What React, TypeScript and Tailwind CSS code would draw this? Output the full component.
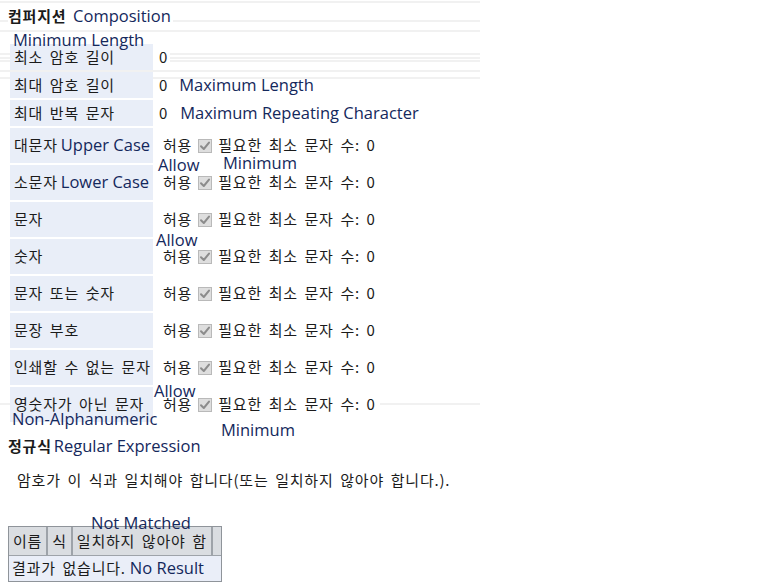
const KR = "font-['Noto_Sans_CJK_KR','Noto_Sans',sans-serif] tracking-[0.8px] [word-spacing:2.5px]";
const EN = "font-['Open_Sans','Noto_Sans_CJK_KR',sans-serif] text-[16.5px] tracking-normal [word-spacing:0px] text-[#14285c]";

const lineTops = [1, 20, 30, 53, 57, 60, 70, 77, 403];

const checkRows: { label: string; en?: string }[] = [
  { label: "대문자", en: "Upper Case" },
  { label: "소문자", en: "Lower Case" },
  { label: "문자" },
  { label: "숫자" },
  { label: "문자 또는 숫자" },
  { label: "문장 부호" },
  { label: "인쇄할 수 없는 문자" },
  { label: "영숫자가 아닌 문자" },
];

const Check = () => (
  <span className="mx-[6px] inline-flex h-[14px] w-[14px] items-center justify-center border border-[#b9b9b9] bg-[#dedede]">
    <svg width="12" height="12" viewBox="0 0 12 12">
      <path
        d="M2 6.2 L4.8 9 L10 2.6"
        fill="none"
        stroke="#8c8c8c"
        strokeWidth="2"
        strokeLinecap="round"
        strokeLinejoin="round"
      />
    </svg>
  </span>
);

const Note = ({ text, className }: { text: string; className: string }) => (
  <span className={`absolute z-10 whitespace-nowrap leading-[18px] ${EN} ${className}`}>
    {text}
  </span>
);

const App = () => {
  return (
    <div
      className={`relative h-[588px] w-[768px] overflow-hidden bg-white text-[15px] text-[#1b1b1b] ${KR}`}
    >
      {/* faint separators behind the form */}
      <div className="absolute inset-0">
        {lineTops.map((t) => (
          <div
            key={t}
            className="absolute left-0 h-[2px] w-[480px] bg-[#f1f1f1]"
            style={{ top: t }}
          />
        ))}
      </div>

      <div className="relative flex flex-col">
        <h2 className="ml-[8px] mt-[6px] h-[20px] self-start bg-white pr-[2px] leading-[20px]">
          <span className="font-bold">컴퍼지션</span>{" "}
          <span className={EN}>Composition</span>
        </h2>

        <div className="ml-[10px] mt-[18px] flex flex-col gap-[2px]">
          {/* length rows */}
          <div className="relative flex h-[26px]">
            <div className="flex w-[143px] items-center bg-[#e9eef8] pl-[4px]">
              최소 암호 길이
            </div>
            <div className="flex items-center bg-white pl-[6px] pr-[2px]">0</div>
            <Note text="Minimum Length" className="-top-[13px] left-[3px]" />
          </div>
          <div className="flex h-[26px]">
            <div className="flex w-[143px] items-center bg-[#e9eef8] pl-[4px]">
              최대 암호 길이
            </div>
            <div className="flex items-center gap-[11px] pl-[6px]">
              <span>0</span>
              <span className={EN}>Maximum Length</span>
            </div>
          </div>
          <div className="flex h-[26px]">
            <div className="flex w-[143px] items-center bg-[#e9eef8] pl-[4px]">
              최대 반복 문자
            </div>
            <div className="flex items-center gap-[12px] pl-[6px]">
              <span>0</span>
              <span className={EN}>Maximum Repeating Character</span>
            </div>
          </div>

          {/* character class rows */}
          {checkRows.map((r, i) => (
            <div key={r.label} className="relative flex h-[35px]">
              <div className="flex w-[143px] shrink-0 items-center whitespace-nowrap bg-[#e9eef8] pl-[4px]">
                {r.label}
                {r.en && <span className={`ml-[3px] ${EN}`}>{r.en}</span>}
              </div>
              <div className="flex items-center whitespace-nowrap bg-white pl-[10px] pr-[4px]">
                <span>허용</span>
                <Check />
                <span>필요한 최소 문자 수: 0</span>
              </div>
              {i === 0 && (
                <>
                  <Note text="Allow" className="left-[148px] top-[28px]" />
                  <Note text="Minimum" className="left-[213px] top-[26px]" />
                </>
              )}
              {i === 3 && <Note text="Allow" className="-top-[8px] left-[146px]" />}
              {i === 7 && (
                <>
                  <Note text="Allow" className="-top-[5px] left-[144px]" />
                  <Note text="Non-Alphanumeric" className="left-[2px] top-[23px]" />
                  <Note text="Minimum" className="left-[211px] top-[34px]" />
                </>
              )}
            </div>
          ))}
        </div>

        <h2 className="ml-[8px] mt-[14px] h-[20px] leading-[20px]">
          <span className="font-bold">정규식</span>
          <span className={`ml-[2px] ${EN}`}>Regular Expression</span>
        </h2>

        <p className="ml-[17px] mt-[14px] h-[20px] leading-[20px]">
          암호가 이 식과 일치해야 합니다(또는 일치하지 않아야 합니다.).
        </p>

        <div className="relative ml-[8px] mt-[36px] self-start">
          <table className="border-separate border-spacing-0 border border-[#8f949a]">
            <thead>
              <tr className="h-[29px] bg-[#dadde1]">
                <th className="border-b border-r-2 border-[#9ea3a9] px-[4px] text-left font-normal whitespace-nowrap">
                  이름
                </th>
                <th className="border-b border-r-2 border-[#9ea3a9] px-[4px] text-left font-normal">
                  식
                </th>
                <th className="border-b border-r-2 border-[#9ea3a9] px-[4px] text-left font-normal whitespace-nowrap">
                  일치하지 않아야 함
                </th>
                <th className="w-[8px] border-b border-[#9ea3a9] font-normal"></th>
              </tr>
            </thead>
            <tbody>
              <tr className="h-[25px] bg-[#eaeef8]">
                <td colSpan={4} className="whitespace-nowrap px-[3px]">
                  결과가 없습니다.<span className={`ml-[4px] ${EN}`}>No Result</span>
                </td>
              </tr>
            </tbody>
          </table>
          <Note text="Not Matched" className="-top-[12px] left-[83px]" />
        </div>
      </div>
    </div>
  );
};

export default App;
